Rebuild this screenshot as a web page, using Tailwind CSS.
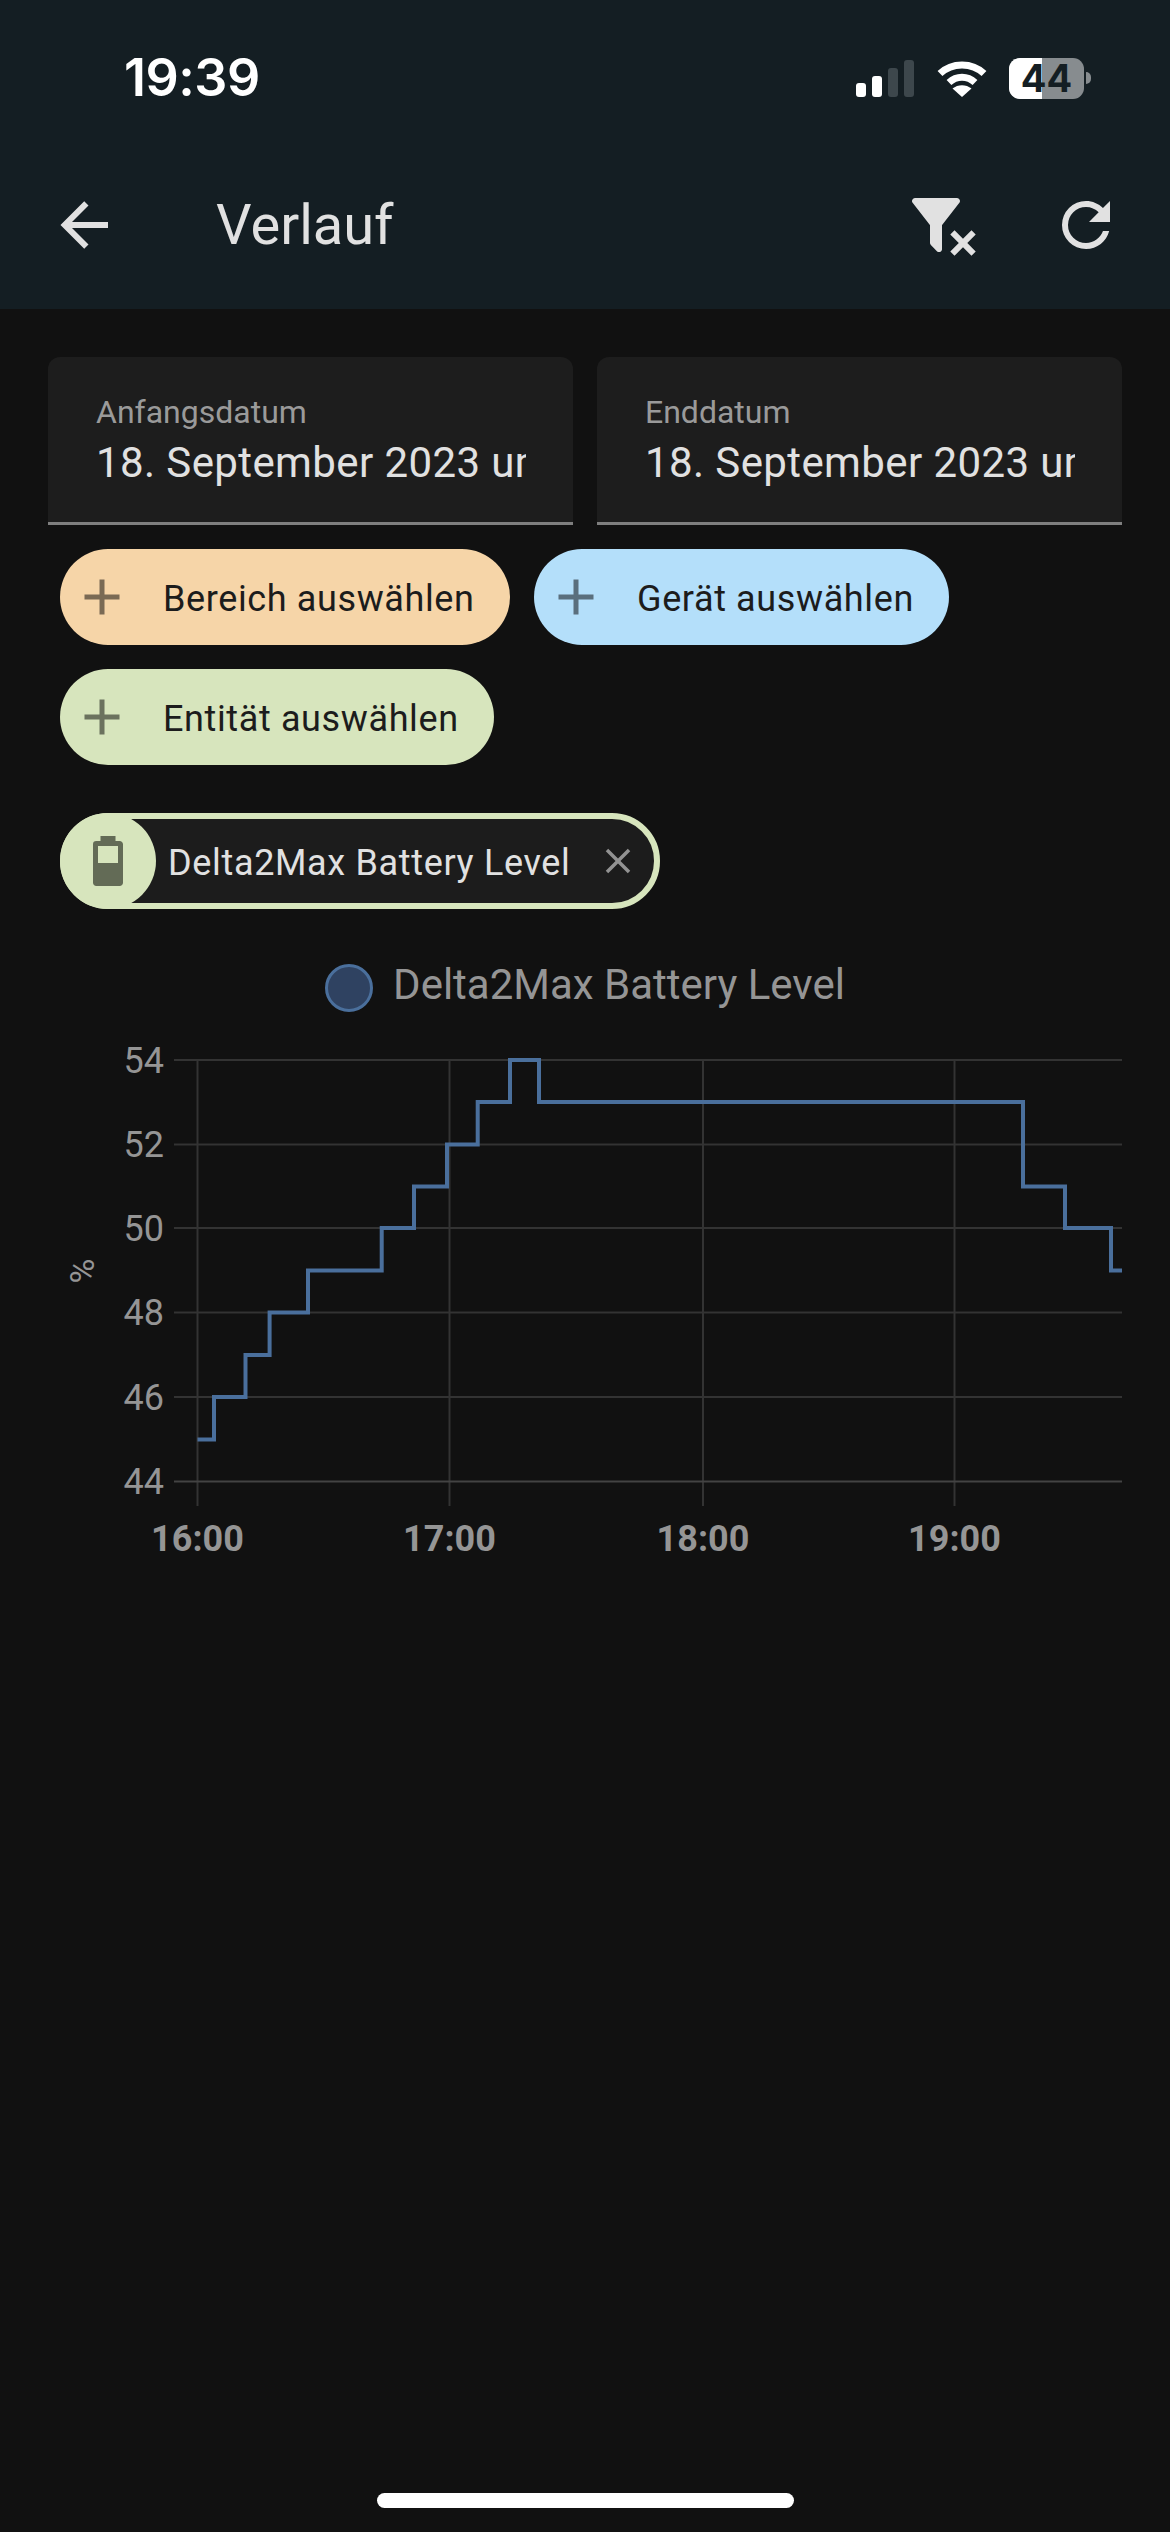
<!DOCTYPE html>
<html lang="de">
<head>
  <meta charset="UTF-8" />
  <meta name="viewport" content="width=device-width, initial-scale=1.0"/>
  <title>Verlauf</title>
  <script src="https://cdn.jsdelivr.net/npm/@tailwindcss/browser@4"></script>
</head>
<body class="w-[1170px] h-[2532px] overflow-hidden bg-[#111111] text-[#e1e1e1] font-['Roboto',sans-serif] flex flex-col">

  <!-- Header -->
  <header class="bg-[#141e23] h-[309px] shrink-0">
    <!-- Status bar -->
    <div class="h-[156px] flex items-center pl-[124px] pr-[79px] justify-between">
      <span class="font-['Inter',sans-serif] font-semibold text-[52px] leading-none text-white tracking-[-0.5px]">19:39</span>
      <div class="flex items-center">
        <div class="flex items-end gap-[6px] h-[37px]">
          <div class="w-[10px] h-[14px] rounded-[3px] bg-white"></div>
          <div class="w-[10px] h-[21px] rounded-[3px] bg-white"></div>
          <div class="w-[10px] h-[29px] rounded-[3px] bg-[#3d474c]"></div>
          <div class="w-[10px] h-[37px] rounded-[3px] bg-[#3d474c]"></div>
        </div>
        <svg class="ml-[23px] w-[50px] h-[37px]" viewBox="0 0 50 37" fill="none">
          <path d="M3 13.5C15 2 35 2 47 13.5" stroke="#fff" stroke-width="7"/>
          <path d="M12 22.5C19.5 15.5 30.5 15.5 38 22.5" stroke="#fff" stroke-width="7"/>
          <path d="M25 37L15.5 28.5C21 24 29 24 34.5 28.5Z" fill="#fff"/>
        </svg>
        <div class="ml-[22px] relative w-[75px] h-[41px] rounded-[11px] overflow-hidden bg-[#878c8f] flex items-center justify-center">
          <div class="absolute inset-y-0 left-0 w-[33px] bg-white"></div>
          <span class="relative font-['Inter',sans-serif] font-bold text-[38px] leading-none text-[#141e23]">44</span>
        </div>
        <div class="ml-[2px] w-[5px] h-[12px] rounded-r-full bg-[#878c8f]"></div>
      </div>
    </div>
    <!-- Toolbar -->
    <div class="h-[138px] flex items-center pl-[48px] pr-[48px] text-[#e1e1e1]">
      <svg class="w-[72px] h-[72px]" viewBox="0 0 24 24" fill="currentColor"><path d="M20,11V13H8L13.5,18.5L12.08,19.92L4.16,12L12.08,4.08L13.5,5.5L8,11H20Z"/></svg>
      <h1 class="ml-[96px] text-[56px] leading-none font-normal flex-1">Verlauf</h1>
      <svg class="w-[72px] h-[72px]" viewBox="0 0 24 24" fill="currentColor"><path d="M14.76,20.83L17.6,18L14.76,15.17L16.17,13.76L19,16.57L21.83,13.76L23.24,15.17L20.43,18L23.24,20.83L21.83,22.24L19,19.4L16.17,22.24L14.76,20.83M12,12V19.88C12.04,20.18 11.94,20.5 11.71,20.71C11.32,21.1 10.69,21.1 10.3,20.71L8.29,18.7C8.06,18.47 7.96,18.16 8,17.87V12H7.97L2.21,4.62C1.87,4.19 1.95,3.56 2.38,3.22C2.57,3.08 2.78,3 3,3H17C17.22,3 17.43,3.08 17.62,3.22C18.05,3.56 18.13,4.19 17.79,4.62L12.03,12H12Z"/></svg>
      <svg class="ml-[72px] w-[72px] h-[72px]" viewBox="0 0 24 24" fill="currentColor"><path d="M17.65,6.35C16.2,4.9 14.21,4 12,4A8,8 0 0,0 4,12A8,8 0 0,0 12,20C15.73,20 18.84,17.45 19.73,14H17.65C16.83,16.33 14.61,18 12,18A6,6 0 0,1 6,12A6,6 0 0,1 12,6C13.66,6 15.14,6.69 16.22,7.78L13,11H20V4L17.65,6.35Z"/></svg>
    </div>
  </header>

  <main class="flex-1 px-[48px] pt-[48px]">
    <!-- Date pickers -->
    <div class="grid grid-cols-2 gap-[24px]">
      <div class="h-[168px] rounded-t-[12px] bg-[#1d1d1d] border-b-[3px] border-[#7f7f7f] pl-[48px] pr-[47px] pt-[35px]">
        <div class="text-[32px] leading-[40px] text-[#9a9a9a]">Anfangsdatum</div>
        <div class="mt-[6px] text-[42px] leading-[50px] tracking-[0.4px] whitespace-nowrap overflow-hidden">18. September 2023 um 19:39</div>
      </div>
      <div class="h-[168px] rounded-t-[12px] bg-[#1d1d1d] border-b-[3px] border-[#7f7f7f] pl-[48px] pr-[47px] pt-[35px]">
        <div class="text-[32px] leading-[40px] text-[#9a9a9a]">Enddatum</div>
        <div class="mt-[6px] text-[42px] leading-[50px] tracking-[0.4px] whitespace-nowrap overflow-hidden">18. September 2023 um 19:39</div>
      </div>
    </div>

    <!-- Target chips -->
    <div class="mt-[24px] pl-[12px] flex flex-wrap gap-[24px] w-[1000px] text-[36px] tracking-[0.62px] text-[#1c1c1c]">
      <div class="h-[96px] w-[450px] rounded-full bg-[#f6d5a8] flex items-center pl-[12px]">
        <svg class="w-[60px] h-[60px] text-[#7a6a54]" viewBox="0 0 24 24" fill="currentColor"><path d="M19,13H13V19H11V13H5V11H11V5H13V11H19V13Z"/></svg>
        <span class="ml-[31px] pt-[3px]">Bereich auswählen</span>
      </div>
      <div class="h-[96px] w-[415px] rounded-full bg-[#b4dffa] flex items-center pl-[12px]">
        <svg class="w-[60px] h-[60px] text-[#5a6f7d]" viewBox="0 0 24 24" fill="currentColor"><path d="M19,13H13V19H11V13H5V11H11V5H13V11H19V13Z"/></svg>
        <span class="ml-[31px] pt-[3px]">Gerät auswählen</span>
      </div>
      <div class="h-[96px] w-[434px] rounded-full bg-[#d7e5bd] flex items-center pl-[12px]">
        <svg class="w-[60px] h-[60px] text-[#6b725e]" viewBox="0 0 24 24" fill="currentColor"><path d="M19,13H13V19H11V13H5V11H11V5H13V11H19V13Z"/></svg>
        <span class="ml-[31px] pt-[3px]">Entität auswählen</span>
      </div>
    </div>

    <!-- Selected entity -->
    <div class="mt-[48px] ml-[12px] w-[600px] h-[96px] rounded-full border-[6px] border-[#d7e5bd] bg-[#1c1c1c] flex items-center text-[36px] tracking-[0.66px]">
      <div class="-ml-[6px] w-[96px] h-[96px] shrink-0 rounded-full bg-[#d7e5bd] flex items-center justify-center">
        <svg class="w-[60px] h-[60px] text-[#636b56]" viewBox="0 0 24 24" fill="currentColor"><path d="M16,12.8H8V6H16M16.67,4H15V2H9V4H7.33A1.33,1.33 0 0,0 6,5.33V20.66C6,21.4 6.6,22 7.33,22H16.67C17.4,22 18,21.4 18,20.67V5.33C18,4.6 17.4,4 16.67,4Z"/></svg>
      </div>
      <span class="ml-[12px] pt-[3px] flex-1 whitespace-nowrap">Delta2Max Battery Level</span>
      <svg class="mr-[15px] w-[42px] h-[42px] text-[#929292]" viewBox="0 0 24 24" fill="currentColor"><path d="M19,6.41L17.59,5L12,10.59L6.41,5L5,6.41L10.59,12L5,17.59L6.41,19L12,13.41L17.59,19L19,17.59L13.41,12L19,6.41Z"/></svg>
    </div>

    <!-- Legend -->
    <div class="mt-[55px] flex items-center justify-center gap-[20px] h-[48px] text-[42px] leading-none text-[#959595]">
      <div class="w-[48px] h-[48px] rounded-full bg-[#2f4261] border-[3px] border-[#4a6f9c]"></div>
      <span class="pb-[6px]">Delta2Max Battery Level</span>
    </div>

    <!-- Chart, drawn like a canvas -->
    <svg class="-mx-[48px] mt-[29px] block w-[1170px] h-[516px]" viewBox="0 1040 1170 516" fill="none">
      <g stroke="#333333" stroke-width="2">
        <path d="M174 1059H1122M174 1143.5H1122M174 1227H1122M174 1311.5H1122M174 1396H1122"/>
        <path d="M197.5 1059V1505M449.5 1059V1505M703 1059V1505M954.5 1059V1505"/>
      </g>
      <path d="M174 1480.5H1122" stroke="#434343" stroke-width="2"/>
      <path d="M197.5 1438.5H214V1396H245.5V1354H269.6V1311.5H308V1269.5H381.7V1227H414V1185.5H447V1143.5H477.7V1101H510V1059H539V1101H1023V1185.5H1065V1227H1111V1269.5H1122" stroke="#4a6f9c" stroke-width="4"/>
      <g fill="#959595" font-size="36" text-anchor="end">
        <text x="164" y="1072">54</text>
        <text x="164" y="1156">52</text>
        <text x="164" y="1240">50</text>
        <text x="164" y="1324">48</text>
        <text x="164" y="1409">46</text>
        <text x="164" y="1493">44</text>
      </g>
      <text transform="translate(94 1270) rotate(-90)" fill="#959595" font-size="34" text-anchor="middle">%</text>
      <g fill="#959595" font-size="36" font-weight="700" text-anchor="middle">
        <text x="197.5" y="1550">16:00</text>
        <text x="449.5" y="1550">17:00</text>
        <text x="703" y="1550">18:00</text>
        <text x="954.5" y="1550">19:00</text>
      </g>
    </svg>
  </main>

  <!-- Home indicator -->
  <div class="shrink-0 mb-[24px] mx-auto w-[417px] h-[15px] rounded-full bg-white"></div>
</body>
</html>
